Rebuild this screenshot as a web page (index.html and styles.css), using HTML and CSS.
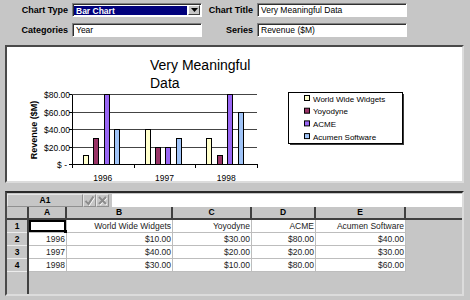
FILE: index.html
```html
<!DOCTYPE html>
<html lang="en">
<head>
    <meta charset="UTF-8">
    <meta name="viewport" content="width=device-width, initial-scale=1.0">
    <title>Chart Editor</title>
    <link rel="stylesheet" href="styles.css">
</head>
<body>
    <div class="app">
        <div class="form">
            <label class="label">Chart Type</label>
            <div class="combo">
                <span class="combo-value">Bar Chart</span>
                <span class="combo-btn">
                    <svg width="7" height="4" viewBox="0 0 7 4"><path d="M0 0h7L3.5 4z" fill="#000"/></svg>
                </span>
            </div>
            <label class="label">Chart Title</label>
            <input class="field" value="Very Meaningful Data">

            <label class="label">Categories</label>
            <input class="field" value="Year">
            <label class="label">Series</label>
            <input class="field" value="Revenue ($M)">
        </div>

        <div class="chart-panel">
            <svg id="chart" width="455" height="134" viewBox="7 47 455 134"></svg>
        </div>

        <div class="sheet">
            <div class="formula-bar">
                <div class="name-box">A1</div>
                <span class="fx-btn">
                    <svg width="11" height="11" viewBox="0 0 11 11"><path d="M1.5 6l3 3 5-7.5" fill="none" stroke="#fff" stroke-width="2.2" transform="translate(0.6 0.6)"/><path d="M1.5 6l3 3 5-7.5" fill="none" stroke="#8c8c8c" stroke-width="2.2"/></svg>
                </span>
                <span class="fx-btn">
                    <svg width="11" height="11" viewBox="0 0 11 11"><path d="M2 2l7 7M9 2l-7 7" fill="none" stroke="#fff" stroke-width="2.2" transform="translate(0.6 0.6)"/><path d="M2 2l7 7M9 2l-7 7" fill="none" stroke="#8c8c8c" stroke-width="2.2"/></svg>
                </span>
                <div class="formula-input"></div>
            </div>
            <div class="sheet-body">
                <div class="row-heads" id="row-heads"></div>
                <div class="cells" id="cells"></div>
            </div>
        </div>
    </div>

    <script>
        const categories = ['1996', '1997', '1998'];
        const series = [
            { name: 'World Wide Widgets', color: '#ffffcc', values: [10, 40, 30] },
            { name: 'Yoyodyne', color: '#993366', values: [30, 20, 10] },
            { name: 'ACME', color: '#9966f4', values: [80, 20, 80] },
            { name: 'Acumen Software', color: '#a0c4f8', values: [40, 30, 60] }
        ];
        const titleLines = ['Very Meaningful', 'Data'];
        const columns = [
            { letter: 'A', width: 38 },
            { letter: 'B', width: 106 },
            { letter: 'C', width: 79 },
            { letter: 'D', width: 64 },
            { letter: 'E', width: 90 }
        ];

        function money(v) {
            return '$' + v.toFixed(2);
        }

        function drawChart() {
            const left = 72, right = 257, base = 164, scale = 0.869;
            const band = (right - left) / categories.length;
            const yOf = v => Math.round(base - v * scale) + 0.5;
            let svg = '';

            titleLines.forEach((line, i) => {
                svg += `<text class="chart-title" x="150" y="${70 + i * 17.5}">${line}</text>`;
            });
            svg += `<text class="axis-title" transform="translate(36.5 130) rotate(-90)">Revenue ($M)</text>`;

            [0, 20, 40, 60, 80].forEach(v => {
                const y = yOf(v);
                if (v) svg += `<line class="grid-line" x1="${left}" y1="${y}" x2="${right}" y2="${y}"/>`;
                svg += `<line class="axis" x1="${left - 3}" y1="${y}" x2="${left}" y2="${y}"/>`;
                svg += `<text class="tick" x="${v ? 70 : 67}" y="${y + 3}">${v ? money(v) : '$ -'}</text>`;
            });

            categories.forEach((cat, c) => {
                series.forEach((s, i) => {
                    const x = Math.round(left + c * band + 11 + i * 10.4) + 0.5;
                    const y = yOf(s.values[c]);
                    svg += `<rect class="bar" x="${x}" y="${y}" width="5" height="${base + 0.5 - y}" fill="${s.color}"/>`;
                });
                svg += `<text class="cat" x="${left + (c + 0.5) * band}" y="180.5">${cat}</text>`;
            });

            svg += `<line class="axis" x1="${left + 0.5}" y1="95" x2="${left + 0.5}" y2="${base + 0.5}"/>`;
            svg += `<line class="axis" x1="${left}" y1="${base + 0.5}" x2="${right}" y2="${base + 0.5}"/>`;
            for (let c = 0; c <= categories.length; c++) {
                const x = Math.round(left + c * band) + 0.5;
                svg += `<line class="axis" x1="${x}" y1="${base}" x2="${x}" y2="${base + 4}"/>`;
            }

            // legend
            svg += `<rect x="290" y="94" width="114" height="51" fill="#3a3a3a"/>`;
            svg += `<rect x="288.5" y="92.5" width="114" height="51" fill="#fff" stroke="#000"/>`;
            series.forEach((s, i) => {
                const y = 95.5 + i * 12.7;
                svg += `<rect class="bar" x="304.5" y="${y.toFixed(1)}" width="5" height="5" fill="${s.color}"/>`;
                svg += `<text class="legend-text" x="313" y="${(y + 6).toFixed(1)}">${s.name}</text>`;
            });

            document.getElementById('chart').innerHTML = svg;
        }

        function drawSheet() {
            const rows = [
                ['', ...series.map(s => s.name)],
                ...categories.map((cat, i) => [cat, ...series.map(s => money(s.values[i]))])
            ];

            document.getElementById('row-heads').innerHTML = '<div class="corner"></div>' +
                rows.map((_, i) => `<div class="row-head">${i + 1}</div>`).join('');

            let html = '<div class="col-heads">' +
                columns.map(c => `<div class="col-head" style="width:${c.width}px">${c.letter}</div>`).join('') +
                '</div>';
            rows.forEach((row, r) => {
                html += '<div class="sheet-row">' +
                    row.map((v, c) => `<div class="cell${r === 0 && c === 0 ? ' selected' : ''}" style="width:${columns[c].width}px">${v}</div>`).join('') +
                    '</div>';
            });
            document.getElementById('cells').innerHTML = html;
        }

        drawChart();
        drawSheet();
    </script>
</body>
</html>
```

FILE: styles.css
```css
* {
    box-sizing: border-box;
}
body {
    margin: 0;
    background-color: #c6c6c6;
    font-family: "Liberation Sans", Arial, sans-serif;
    font-size: 8.5px;
    color: #000;
}
.app {
    width: 470px;
    height: 300px;
    padding: 3px 6px 0 5px;
}

/* top form */
.form {
    display: grid;
    grid-template-columns: 63px 130px 47px 150px;
    grid-auto-rows: 14px;
    column-gap: 4px;
    row-gap: 6px;
    align-items: center;
}
.label {
    font-weight: bold;
    font-size: 9px;
    text-align: right;
    white-space: nowrap;
}
.field, .combo {
    height: 14px;
    border: 1px solid;
    border-color: #808080 #fff #fff #808080;
    box-shadow: inset 1px 1px 0 #303030;
    background-color: #fff;
}
.field {
    font: 8.5px "Liberation Sans", Arial, sans-serif;
    color: #000;
    padding: 0 0 0 3px;
    outline: none;
}
.combo {
    display: flex;
    padding: 1px;
}
.combo-value {
    flex: 1;
    margin: 1px 1px 0 0;
    background-color: #00007c;
    color: #fff;
    font-weight: bold;
    line-height: 10px;
    padding-left: 2px;
}
.combo-btn {
    width: 12px;
    display: flex;
    align-items: center;
    justify-content: center;
    background-color: #c6c6c6;
    border: 1px solid;
    border-color: #fff #404040 #404040 #fff;
}

/* chart */
.chart-panel {
    margin-top: 8px;
    height: 138px;
    background-color: #fff;
    border: 2px solid;
    border-color: #4a4a4a #dcdcdc #dcdcdc #4a4a4a;
}
#chart {
    display: block;
    font-family: "Liberation Sans", Arial, sans-serif;
}
.chart-title {
    font-size: 14px;
}
.axis-title {
    font-size: 9px;
    font-weight: bold;
    text-anchor: middle;
}
.tick {
    font-size: 8.5px;
    text-anchor: end;
}
.cat {
    font-size: 8.5px;
    text-anchor: middle;
}
.legend-text {
    font-size: 8px;
}
.grid-line {
    stroke: #444;
}
.axis {
    stroke: #000;
}
.bar {
    stroke: #000;
}

/* spreadsheet */
.sheet {
    margin-top: 8px;
    height: 105px;
    border: 2px solid;
    border-color: #2a2a2a #dcdcdc #dcdcdc #4a4a4a;
    display: flex;
    flex-direction: column;
}
.formula-bar {
    height: 14px;
    display: flex;
    padding-top: 1px;
}
.name-box {
    width: 76px;
    text-align: center;
    font-weight: bold;
    line-height: 11px;
    border: 1px solid;
    border-color: #e6e6e6 #909090 #909090 #e6e6e6;
}
.fx-btn {
    width: 13px;
    display: flex;
    align-items: center;
    justify-content: center;
    border: 1px solid;
    border-color: #e6e6e6 #909090 #909090 #e6e6e6;
}
.formula-input {
    flex: 1;
    margin-left: 3px;
    background-color: #fff;
}
.sheet-body {
    flex: 1;
    display: flex;
    min-height: 0;
}
.row-heads {
    width: 22px;
    border-right: 2px solid #404040;
}
.corner {
    height: 13px;
    border-bottom: 2px solid #404040;
}
.row-head {
    height: 13px;
    line-height: 12px;
    text-align: center;
    font-weight: bold;
    border-bottom: 1px solid #ececec;
}
.cells {
    flex: 1;
}
.col-heads {
    display: flex;
    height: 13px;
    border-bottom: 2px solid #404040;
}
.col-head {
    text-align: center;
    font-weight: bold;
    line-height: 11px;
    border-right: 2px solid #404040;
}
.sheet-row {
    display: flex;
    height: 13px;
}
.cell {
    position: relative;
    background-color: #fff;
    border-right: 1px solid #bdbdbd;
    border-bottom: 1px solid #bdbdbd;
    text-align: right;
    padding-right: 1px;
    line-height: 12px;
    white-space: nowrap;
    color: #222;
}
.cell.selected {
    box-shadow: inset 0 0 0 2px #000;
}
.cell.selected::after {
    content: '';
    position: absolute;
    right: -2px;
    bottom: -2px;
    width: 4px;
    height: 4px;
    background-color: #000;
}
```
